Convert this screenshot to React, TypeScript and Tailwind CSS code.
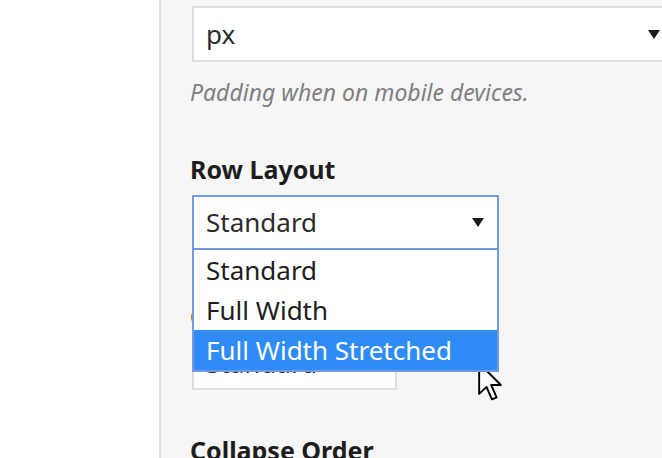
import React from 'react';

const sans = { fontFamily: '"Noto Sans", "Open Sans", sans-serif' };

function Caret() {
  return (
    <svg width="12" height="9" viewBox="0 0 12 9" className="shrink-0">
      <path d="M0 0 H12 L6 9 Z" fill="#1a1a1a" />
    </svg>
  );
}

function Cursor() {
  return (
    <svg
      width="24"
      height="39"
      viewBox="0 0 12.4 20"
      className="absolute left-[478px] top-[362px]"
    >
      <path
        d="M0.6 0.6 V16.4 L4.4 12.8 L7.2 19.2 L9.6 18.2 L6.8 11.8 H11.8 Z"
        fill="#fff"
        stroke="#000"
        strokeWidth="1"
        strokeLinejoin="round"
      />
    </svg>
  );
}

const options = ['Standard', 'Full Width', 'Full Width Stretched'];

export default function App() {
  return (
    <div className="relative flex w-[662px] h-[458px] overflow-hidden bg-white" style={sans}>
      <div className="w-[159px] shrink-0 bg-white" />
      <div className="w-[2px] shrink-0 bg-[#dcdcdc]" />
      <div className="flex-1 bg-[#f6f6f6] pl-[29px]">
        {/* Mobile padding unit */}
        <div className="mt-[6px] ml-[2px] flex h-[56px] w-[486px] items-center justify-between border-2 border-[#dedede] bg-white pl-[12px] pr-[16px] text-[26px] text-[#2c2c2c]">
          <span className="leading-none">px</span>
          <Caret />
        </div>
        <p className="mt-[16px] text-[23px] leading-[28px] italic text-[#808080]">Padding when on mobile devices.</p>

        {/* Row Layout */}
        <div className="mt-[47px] text-[25px] leading-[32px] font-bold text-[#1d1d1d]">Row Layout</div>
        <div className="relative mt-[10px] ml-[2px] w-[307px]">
          <div className="flex h-[55px] items-center justify-between border-2 border-[#6f9be0] bg-white pl-[12px] pr-[13px] text-[26px] text-[#2c2c2c]">
            <span>Standard</span>
            <Caret />
          </div>
          <ul className="absolute left-0 top-[55px] z-10 w-[307px] border-x-2 border-b-2 border-[#6f9be0] bg-white text-[26px] text-[#1d1d1d]">
            {options.map((opt, i) => (
              <li
                key={opt}
                className={
                  i === 2
                    ? 'flex h-[40px] items-center bg-[#2f8cf7] pl-[12px] text-white'
                    : 'flex h-[40px] items-center pl-[12px]'
                }
              >
                {opt}
              </li>
            ))}
          </ul>
        </div>

        {/* Collapse Behaviour (under the open list) */}
        <div className="mt-[50px] text-[25px] leading-[32px] font-bold text-[#1d1d1d]">Collapse Behaviour</div>
        <div className="mt-[4px] ml-[2px] flex h-[54px] w-[205px] items-center border-2 border-[#dedede] bg-white pl-[12px] text-[26px] text-[#2c2c2c]">
          Standard
        </div>

        <div className="mt-[44px] text-[25px] leading-[32px] font-bold text-[#1d1d1d]">Collapse Order</div>
      </div>
      <Cursor />
    </div>
  );
}
